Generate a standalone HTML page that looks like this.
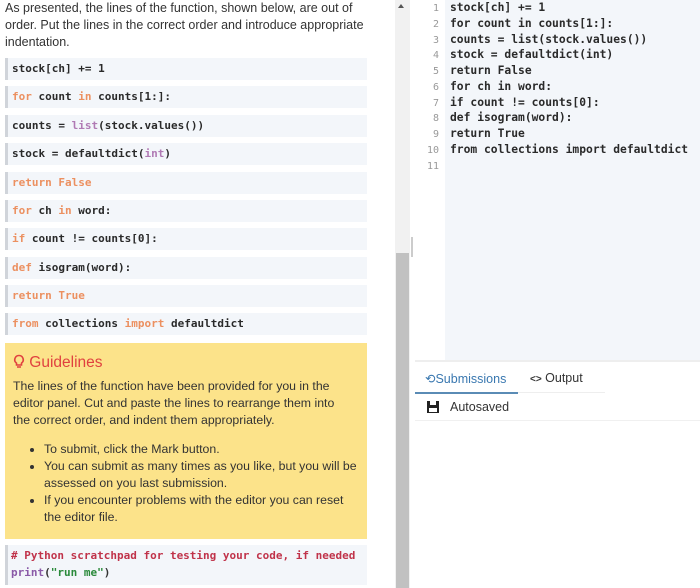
<!DOCTYPE html>
<html><head><meta charset="utf-8"><style>
*{margin:0;padding:0;box-sizing:border-box}
body{width:700px;height:588px;overflow:hidden;background:#fff;font-family:"Liberation Sans",sans-serif;color:#333;position:relative}
.intro{position:absolute;left:5px;top:0;width:370px;font-size:12.5px;line-height:17px;color:#333}
.cb{position:absolute;left:5px;width:362px;height:22px;background:#f3f6fa;border-left:3px solid #d0d4da;font-family:"DejaVu Sans Mono",monospace;font-size:11px;line-height:22px;padding-left:4px;color:#2a2a2a;font-weight:bold}
.k{color:#ec9060}.b{color:#b07ab4}
.guide{position:absolute;left:5px;top:343px;width:362px;height:196px;background:#fce38a;padding:11px 8px}
.guide h3{color:#e0413f;font-size:15.5px;font-weight:normal;margin-bottom:6px}
.guide p{width:330px}
.guide p,.guide li{font-size:12.3px;line-height:17.2px;color:#333}
.guide ul{margin-top:11px;padding-left:31px}
.scr{position:absolute;left:5px;top:545px;width:362px;height:40px;background:#f3f6fa;border-left:3px solid #d0d4da;font-family:"DejaVu Sans Mono",monospace;font-size:11px;line-height:17px;padding:2px 0 0 3px;white-space:nowrap;overflow:hidden;font-weight:bold}
.track{position:absolute;left:395px;top:0;width:15px;height:588px;background:#f1f1f1}
.thumb{position:absolute;left:396px;top:253px;width:13px;height:335px;background:#c1c1c1}
.gut{position:absolute;left:415px;top:0;width:30px;height:360px;background:#fff;font-family:"DejaVu Sans Mono",monospace;font-size:10px;line-height:15.75px;color:#999;text-align:right;padding:0 6px 0 0;padding-top:1px}
.ed{position:absolute;left:445px;top:0;width:255px;height:360px;background:#f3f6fa;font-family:"DejaVu Sans Mono",monospace;font-size:11.3px;line-height:15.75px;padding:0 0 0 5px;color:#2a2a2a;white-space:pre;font-weight:bold}
</style></head><body>
<div class="intro">As presented, the lines of the function, shown below, are out of order. Put the lines in the correct order and introduce appropriate indentation.</div>
<div class="cb" style="top:58px">stock[ch] += 1</div>
<div class="cb" style="top:86px"><span class="k">for</span> count <span class="k">in</span> counts[1:]:</div>
<div class="cb" style="top:115px">counts = <span class="b">list</span>(stock.values())</div>
<div class="cb" style="top:143px">stock = defaultdict(<span class="b">int</span>)</div>
<div class="cb" style="top:172px"><span class="k">return False</span></div>
<div class="cb" style="top:200px"><span class="k">for</span> ch <span class="k">in</span> word:</div>
<div class="cb" style="top:228px"><span class="k">if</span> count != counts[0]:</div>
<div class="cb" style="top:257px"><span class="k">def</span> isogram(word):</div>
<div class="cb" style="top:285px"><span class="k">return True</span></div>
<div class="cb" style="top:313px"><span class="k">from</span> collections <span class="k">import</span> defaultdict</div>
<div class="guide"><h3><svg width="12" height="15" viewBox="0 0 12 15" style="vertical-align:-2px"><path d="M6 1.5a4.2 4.2 0 0 0-2.5 7.6V11h5V9.1A4.2 4.2 0 0 0 6 1.5z M4 13h4" fill="none" stroke="#e0413f" stroke-width="1.6"/></svg> Guidelines</h3>
<p>The lines of the function have been provided for you in the editor panel. Cut and paste the lines to rearrange them into the correct order, and indent them appropriately.</p>
<ul><li>To submit, click the Mark button.</li><li>You can submit as many times as you like, but you will be assessed on you last submission.</li><li>If you encounter problems with the editor you can reset the editor file.</li></ul></div>
<div class="scr"><span style="color:#c0334a"># Python scratchpad for testing your code, if needed</span><br><span style="color:#8a5aa8">print</span>(<span style="color:#2a8a3a">"run me"</span>)</div>
<div class="track"></div><div class="thumb"></div>
<div style="position:absolute;left:398px;top:4px;width:0;height:0;border-left:3.5px solid transparent;border-right:3.5px solid transparent;border-bottom:4px solid #555"></div>
<div style="position:absolute;left:411px;top:237px;width:2px;height:20px;background:#ccc"></div>
<div class="gut">1<br>2<br>3<br>4<br>5<br>6<br>7<br>8<br>9<br>10<br>11</div>
<div class="ed">stock[ch] += 1
for count in counts[1:]:
counts = list(stock.values())
stock = defaultdict(int)
return False
for ch in word:
if count != counts[0]:
def isogram(word):
return True
from collections import defaultdict</div>
<div style="position:absolute;left:415px;top:360px;width:285px;height:2px;background:#eee"></div>
<div style="position:absolute;left:425px;top:371px;font-size:12.5px;color:#3a78b0">&#x27F2;Submissions</div>
<div style="position:absolute;left:530px;top:371px;font-size:12.5px;color:#333"><b style="font-size:10px">&lt;&gt;</b> Output</div>
<div style="position:absolute;left:415px;top:392px;width:103px;height:2px;background:#5a8bb5"></div>
<div style="position:absolute;left:518px;top:392px;width:87px;height:1px;background:#eee"></div>
<div style="position:absolute;left:427px;top:401px;width:12px;height:12px;background:#222"><div style="position:absolute;left:3px;top:0;width:6px;height:4px;background:#fff"></div><div style="position:absolute;left:2px;top:7px;width:8px;height:4px;background:#fff"></div></div>
<div style="position:absolute;left:450px;top:400px;font-size:12.5px;color:#333">Autosaved</div>
<div style="position:absolute;left:415px;top:420px;width:285px;height:1px;background:#f0f0f0"></div>
</body></html>
